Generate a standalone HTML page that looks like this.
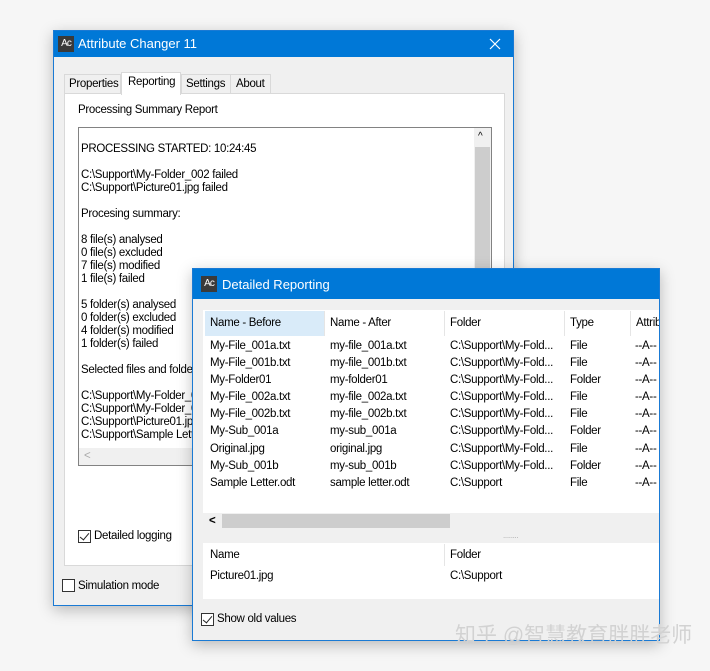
<!DOCTYPE html>
<html><head><meta charset="utf-8"><style>
*{margin:0;padding:0;box-sizing:border-box}
body{width:710px;height:671px;background:#f6f6f6;position:relative;overflow:hidden;font-family:"Liberation Sans",sans-serif;font-size:11.5px;color:#000;letter-spacing:-0.3px}
.a{position:absolute}
.win{position:absolute;background:#f0f0f0;border:1px solid #1a7ad4;box-shadow:0 4px 14px rgba(0,0,0,.25);overflow:hidden}
.tb{position:absolute;left:0;top:0;right:0;background:#0078d7;color:#fff;font-size:13px}
.ic{position:absolute;width:16px;height:16px;background:#3a3a3a;color:#fff;font-size:10px;line-height:16px;text-align:center;letter-spacing:-1px}
.t{position:absolute;white-space:nowrap;line-height:13px}
.cb{position:absolute;width:13px;height:13px;border:1px solid #333;background:#fff}
.cb.k::after{content:"";position:absolute;left:3px;top:0px;width:4px;height:8px;border:solid #222;border-width:0 1.5px 1.5px 0;transform:rotate(40deg)}
</style></head><body>
<!-- main window -->
<div class="win" style="left:53px;top:30px;width:461px;height:576px">
 <div class="tb" style="height:26px"><div class="ic" style="left:4px;top:5px">Ac</div><div class="t" style="left:24px;top:6px;font-size:13px;letter-spacing:0">Attribute Changer 11</div>
 <svg class="a" style="right:12px;top:7px" width="12" height="12"><path d="M1 1L11 11M11 1L1 11" stroke="#fff" stroke-width="1.2"/></svg></div>
 <div class="a" style="left:10px;top:62px;width:441px;height:473px;background:#fff;border:1px solid #d9d9d9"></div>
 <div class="a" style="left:10px;top:43px;width:57px;height:20px;border:1px solid #d9d9d9;background:#f0f0f0"></div><div class="t" style="left:15px;top:47px">Properties</div>
 <div class="a" style="left:67px;top:41px;width:60px;height:23px;border:1px solid #d9d9d9;border-bottom:none;background:#fff"></div><div class="t" style="left:74px;top:45px">Reporting</div>
 <div class="a" style="left:127px;top:43px;width:50px;height:20px;border:1px solid #d9d9d9;background:#f0f0f0"></div><div class="t" style="left:132px;top:47px">Settings</div>
 <div class="a" style="left:176px;top:43px;width:41px;height:20px;border:1px solid #d9d9d9;background:#f0f0f0"></div><div class="t" style="left:182px;top:47px">About</div>
 <div class="t" style="left:24px;top:73px">Processing Summary Report</div>
 <div class="a" style="left:24px;top:96px;width:414px;height:339px;border:1px solid #828282;background:#fff"></div>
 <div class="a" style="left:420px;top:97px;width:17px;height:320px;background:#f0f0f0"><div class="t" style="left:4px;top:2px;font-size:10px">^</div><div class="a" style="left:1px;top:19px;width:15px;height:140px;background:#cdcdcd"></div></div>
 <div class="a" style="left:25px;top:417px;width:395px;height:17px;background:#f0f0f0"><div class="t" style="left:5px;top:2px;color:#aaa">&lt;</div></div>
 <div class="t" style="left:27px;top:112px;line-height:13px">PROCESSING STARTED: 10:24:45<br><br>C:\Support\My-Folder_002 failed<br>C:\Support\Picture01.jpg failed<br><br>Procesing summary:<br><br>8 file(s) analysed<br>0 file(s) excluded<br>7 file(s) modified<br>1 file(s) failed<br><br>5 folder(s) analysed<br>0 folder(s) excluded<br>4 folder(s) modified<br>1 folder(s) failed<br><br>Selected files and folders<br><br>C:\Support\My-Folder_001<br>C:\Support\My-Folder_002<br>C:\Support\Picture01.jpg<br>C:\Support\Sample Letter</div>
 <div class="cb k" style="left:24px;top:499px"></div><div class="t" style="left:40px;top:499px">Detailed logging</div>
 <div class="cb" style="left:8px;top:548px"></div><div class="t" style="left:24px;top:549px">Simulation mode</div>
</div>
<!-- detailed window -->
<div class="win" style="left:192px;top:268px;width:468px;height:373px">
 <div class="tb" style="height:30px"><div class="ic" style="left:8px;top:7px">Ac</div><div class="t" style="left:29px;top:9px;letter-spacing:0">Detailed Reporting</div></div>
 <div class="a" style="left:10px;top:41px;width:459px;height:204px;background:#fff"></div>
 <div class="a" style="left:12px;top:42px;width:120px;height:25px;background:#d9ebf9"></div>
 <div class="a" style="left:131px;top:42px;width:1px;height:25px;background:#e5e5e5"></div>
 <div class="a" style="left:251px;top:42px;width:1px;height:25px;background:#e5e5e5"></div>
 <div class="a" style="left:371px;top:42px;width:1px;height:25px;background:#e5e5e5"></div>
 <div class="a" style="left:437px;top:42px;width:1px;height:25px;background:#e5e5e5"></div>
 <div class="t" style="left:17px;top:48px">Name - Before</div><div class="t" style="left:137px;top:48px">Name - After</div><div class="t" style="left:257px;top:48px">Folder</div><div class="t" style="left:377px;top:48px">Type</div><div class="t" style="left:443px;top:48px">Attrib</div>
 <div class="t" style="left:17px;top:69px;line-height:17.1px">My-File_001a.txt<br>My-File_001b.txt<br>My-Folder01<br>My-File_002a.txt<br>My-File_002b.txt<br>My-Sub_001a<br>Original.jpg<br>My-Sub_001b<br>Sample Letter.odt</div>
 <div class="t" style="left:137px;top:69px;line-height:17.1px">my-file_001a.txt<br>my-file_001b.txt<br>my-folder01<br>my-file_002a.txt<br>my-file_002b.txt<br>my-sub_001a<br>original.jpg<br>my-sub_001b<br>sample letter.odt</div>
 <div class="t" style="left:257px;top:69px;line-height:17.1px">C:\Support\My-Fold...<br>C:\Support\My-Fold...<br>C:\Support\My-Fold...<br>C:\Support\My-Fold...<br>C:\Support\My-Fold...<br>C:\Support\My-Fold...<br>C:\Support\My-Fold...<br>C:\Support\My-Fold...<br>C:\Support</div>
 <div class="t" style="left:377px;top:69px;line-height:17.1px">File<br>File<br>Folder<br>File<br>File<br>Folder<br>File<br>Folder<br>File</div>
 <div class="t" style="left:442px;top:69px;line-height:17.1px">--A--<br>--A--<br>--A--<br>--A--<br>--A--<br>--A--<br>--A--<br>--A--<br>--A--</div>
 <div class="a" style="left:10px;top:244px;width:459px;height:17px;background:#f0f0f0"><div class="t" style="left:6px;top:2px;font-weight:bold">&lt;</div><div class="a" style="left:19px;top:1px;width:228px;height:14px;background:#cdcdcd"></div></div>
 <div class="t" style="left:310px;top:260px;color:#aaa;font-size:8px">........</div>
 <div class="a" style="left:10px;top:274px;width:459px;height:56px;background:#fff"></div>
 <div class="a" style="left:251px;top:275px;width:1px;height:22px;background:#e5e5e5"></div>
 <div class="t" style="left:17px;top:280px">Name</div><div class="t" style="left:257px;top:280px">Folder</div>
 <div class="t" style="left:17px;top:301px">Picture01.jpg</div><div class="t" style="left:257px;top:301px">C:\Support</div>
 <div class="cb k" style="left:8px;top:344px"></div><div class="t" style="left:24px;top:344px">Show old values</div>
</div>
<div class="t" style="left:455px;top:624px;font-size:21px;line-height:24px;color:#d2d2d2;font-family:'Liberation Sans','Noto Sans CJK SC',sans-serif;letter-spacing:0">知乎 @智慧教育胖胖老师</div>
</body></html>
